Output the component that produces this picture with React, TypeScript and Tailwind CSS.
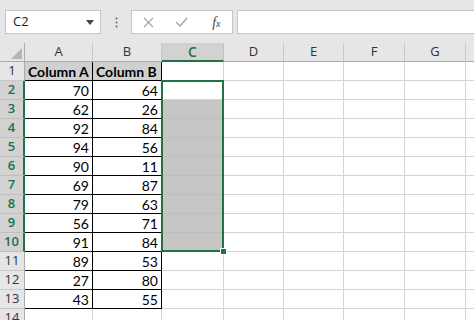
import React from 'react';

const DATA: [number, number][] = [
  [70, 64],
  [62, 26],
  [92, 84],
  [94, 56],
  [90, 11],
  [69, 87],
  [79, 63],
  [56, 71],
  [91, 84],
  [89, 53],
  [27, 80],
  [43, 55],
];

// H is only a sliver at the right edge, its letter is off-screen
const COLS = ['A', 'B', 'C', 'D', 'E', 'F', 'G', ''];

const ui = { fontFamily: '"Open Sans", "Noto Sans", sans-serif' };
const cellFont = { fontFamily: 'Lato, "Liberation Sans", sans-serif' };

function FormulaBar() {
  return (
    <div className="flex h-[43px] items-start bg-[#e6e6e6] pt-[10px]" style={ui}>
      <div className="ml-[5px] flex h-[24px] w-[96px] items-center justify-between border border-[#c6c6c6] bg-white pl-[7px] pr-[6px] text-[13px] text-[#222]">
        <span>C2</span>
        <svg width="8" height="5" viewBox="0 0 8 5">
          <path d="M0 0h8L4 5z" fill="#444" />
        </svg>
      </div>
      <div className="flex h-[24px] w-[30px] items-center justify-center">
        <svg width="3" height="11" viewBox="0 0 3 11">
          <circle cx="1.5" cy="1.5" r="1" fill="#666" />
          <circle cx="1.5" cy="5.5" r="1" fill="#666" />
          <circle cx="1.5" cy="9.5" r="1" fill="#666" />
        </svg>
      </div>
      <div className="flex h-[24px] w-[102px] items-center border border-[#c6c6c6] bg-white">
        <div className="flex w-[34px] justify-center">
          <svg width="11" height="11" viewBox="0 0 11 11">
            <path d="M1 1l9 9M10 1l-9 9" stroke="#a6a6a6" strokeWidth="1.2" />
          </svg>
        </div>
        <div className="flex w-[34px] justify-center">
          <svg width="13" height="10" viewBox="0 0 13 10">
            <path d="M1 5l4 4 7-8" stroke="#a6a6a6" strokeWidth="1.4" fill="none" />
          </svg>
        </div>
        <div className="flex w-[34px] justify-center pl-[2px]">
          <span
            className="text-[14px] italic text-[#444]"
            style={{ fontFamily: '"Liberation Serif", "DejaVu Serif", serif' }}
          >
            f<span className="text-[10px]">x</span>
          </span>
        </div>
      </div>
      <div className="ml-[4px] h-[24px] flex-1 border border-r-0 border-[#c6c6c6] bg-white" />
    </div>
  );
}

function ColumnHeaders() {
  return (
    <>
      <div className="relative h-[19px] border-r border-b border-[#ababab] bg-[#e6e6e6]">
        <svg className="absolute right-[2px] bottom-[2px]" width="11" height="11" viewBox="0 0 11 11">
          <path d="M11 0v11H0z" fill="#b5b5b5" />
        </svg>
      </div>
      {COLS.map((c, i) =>
        c === 'C' ? (
          <div
            key={i}
            className="flex h-[19px] items-center justify-center border-r border-b-2 border-r-[#c0c0c0] border-b-[#217346] bg-[#d2d2d2] text-[14px] font-semibold text-[#217346]"
            style={ui}
          >
            {c}
          </div>
        ) : (
          <div
            key={i}
            className="flex h-[19px] items-center justify-center border-r border-b border-r-[#c8c8c8] border-b-[#ababab] bg-[#e6e6e6] text-[13px] text-[#333]"
            style={ui}
          >
            {c}
          </div>
        )
      )}
    </>
  );
}

function RowHeader({ n }: { n: number }) {
  const sel = n >= 2 && n <= 10;
  return (
    <div
      className={
        sel
          ? 'flex h-[19px] items-center justify-center border-r-2 border-b border-r-[#217346] border-b-[#c0c0c0] bg-[#d2d2d2] text-[13px] font-semibold text-[#217346]'
          : 'flex h-[19px] items-center justify-center border-r border-b border-r-[#ababab] border-b-[#c8c8c8] bg-[#e6e6e6] text-[13px] text-[#333]'
      }
      style={ui}
    >
      {n}
    </div>
  );
}

function Empty() {
  return <div className="h-[19px] border-r border-b border-[#d4d4d4] bg-white" />;
}

function TableCell({ header, children }: { header: boolean; children: React.ReactNode }) {
  return (
    <div
      className={
        'flex h-[19px] items-center border-r border-b border-black px-[3px] text-[14px] text-black ' +
        (header ? 'justify-start bg-[#d0d0d0] font-bold' : 'justify-end bg-white')
      }
      style={cellFont}
    >
      {children}
    </div>
  );
}

function Row({ n }: { n: number }) {
  const inTable = n <= 13;
  const values = n >= 2 && n <= 13 ? DATA[n - 2] : null;
  const cSel = n >= 3 && n <= 10;
  return (
    <>
      <RowHeader n={n} />
      {inTable ? (
        <>
          <TableCell header={n === 1}>{n === 1 ? 'Column A' : values?.[0]}</TableCell>
          <TableCell header={n === 1}>{n === 1 ? 'Column B' : values?.[1]}</TableCell>
        </>
      ) : (
        <>
          <Empty />
          <Empty />
        </>
      )}
      {n === 2 ? (
        <div className="relative h-[19px] border-r border-b border-[#d4d4d4] bg-white">
          {/* selection outline for C2:C10 */}
          <div className="pointer-events-none absolute top-[-1px] left-[-1px] z-10 h-[172px] w-[63px] border-2 border-[#217346]">
            <div className="absolute right-[-5px] bottom-[-5px] h-[7px] w-[7px] border border-white bg-[#217346]" />
          </div>
        </div>
      ) : cSel ? (
        <div className="h-[19px] border-r border-b border-[#bdbdbd] bg-[#c6c6c6]" />
      ) : (
        <Empty />
      )}
      <Empty />
      <Empty />
      <Empty />
      <Empty />
      <Empty />
    </>
  );
}

export default function App() {
  const rows = Array.from({ length: 14 }, (_, i) => i + 1);
  return (
    <div className="h-[320px] w-[474px] overflow-hidden bg-white">
      <FormulaBar />
      <div className="grid grid-cols-[25px_68px_69px_62px_60px_60px_61px_61px_60px]">
        <ColumnHeaders />
        {rows.map((n) => (
          <Row key={n} n={n} />
        ))}
      </div>
    </div>
  );
}
